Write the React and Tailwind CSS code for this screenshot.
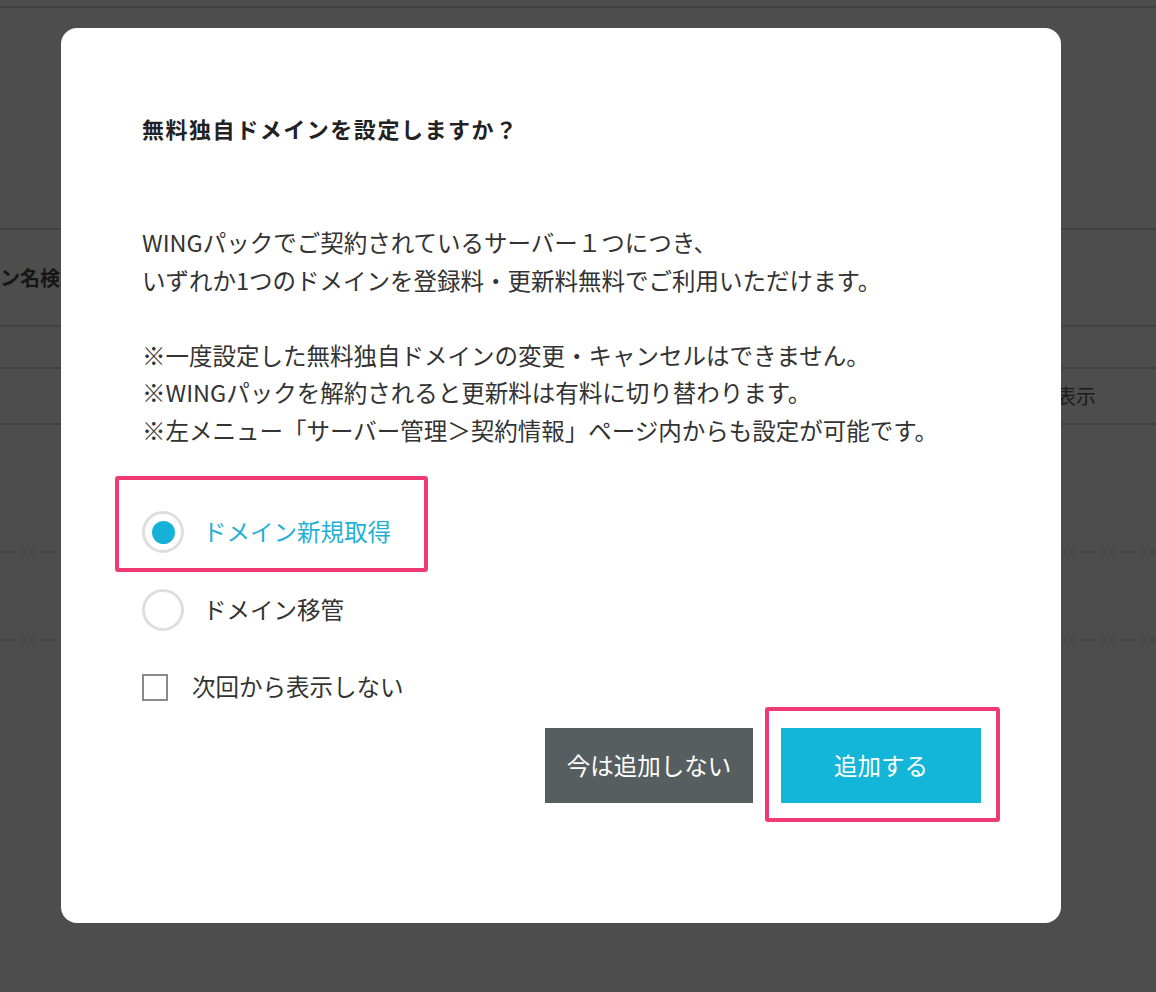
import { useState } from "react";

const font = { fontFamily: '"Noto Sans CJK JP", "Noto Sans", sans-serif' };

const Radio = ({ checked, label, onClick }) => (
  <button onClick={onClick} className="flex h-full items-center gap-[19px] text-left">
    <span className="flex h-[42px] w-[42px] items-center justify-center rounded-full border-[3px] border-[#dedede] bg-white">
      {checked && <span className="h-[23px] w-[23px] rounded-full bg-[#14b2d8]" />}
    </span>
    <span className={checked ? "text-[23.5px] text-[#1fb0d4]" : "text-[23.5px] text-[#333]"}>{label}</span>
  </button>
);

export default function App() {
  const [choice, setChoice] = useState("new");
  const [hide, setHide] = useState(false);

  return (
    <div className="relative h-[992px] w-full overflow-hidden bg-[#4d4d4d]" style={font}>
      {/* page behind the overlay */}
      <div className="h-[8px] border-b-2 border-[#424242]" />
      <div className="h-[222px] border-b-2 border-[#424242]" />
      <div className="flex h-[97px] items-center border-b-2 border-[#424242]">
        <span className="text-[20px] font-bold text-[#161616]">ン名検索</span>
      </div>
      <div className="h-[42px] border-b-2 border-[#424242]" />
      <div className="flex h-[56px] items-center justify-end border-b-2 border-[#424242] pr-[60px]">
        <span className="text-[20px] text-[#1c1c1c]">表示</span>
      </div>
      <div className="h-[128px] border-b-2 border-dashed border-[#444]" />
      <div className="h-[88px] border-b-2 border-dashed border-[#444]" />

      {/* modal */}
      <div className="absolute left-[61px] top-[28px] flex h-[895px] w-[1000px] flex-col rounded-[16px] bg-white px-[81px] pr-[80px] pt-[82px]">
        <h2 className="text-[22px] font-bold leading-[36px] tracking-[0.07em] text-[#222]">
          無料独自ドメインを設定しますか？
        </h2>

        <div className="mt-[78px] text-[23.5px] leading-[37.5px] text-[#333]">
          <p>
            WINGパックでご契約されているサーバー１つにつき、
            <br />
            いずれか1つのドメインを登録料・更新料無料でご利用いただけます。
          </p>
          <p className="mt-[37.5px]">
            ※一度設定した無料独自ドメインの変更・キャンセルはできません。
            <br />
            ※WINGパックを解約されると更新料は有料に切り替わります。
            <br />
            ※左メニュー「サーバー管理＞契約情報」ページ内からも設定が可能です。
          </p>
        </div>

        <div className="mt-[44px] flex flex-col">
          <div className="relative h-[78px]">
            <Radio checked={choice === "new"} label="ドメイン新規取得" onClick={() => setChoice("new")} />
            <div className="pointer-events-none absolute left-[-27px] top-[-17px] h-[96px] w-[313px] rounded-[3px] border-[4px] border-[#ef3a73]" />
          </div>
          <div className="h-[78px]">
            <Radio checked={choice === "transfer"} label="ドメイン移管" onClick={() => setChoice("transfer")} />
          </div>
          <button onClick={() => setHide((v) => !v)} className="flex h-[76px] items-center gap-[24px] text-left">
            <span className="flex h-[27px] w-[26px] items-center justify-center border-2 border-[#8a8a8a]">
              {hide && <span className="text-[18px] leading-none text-[#333]">✓</span>}
            </span>
            <span className="text-[23.5px] text-[#333]">次回から表示しない</span>
          </button>
        </div>

        <div className="mt-[3px] flex justify-end gap-[28px]">
          <button className="h-[75px] w-[208px] bg-[#575e60] text-[23.5px] text-white">今は追加しない</button>
          <div className="relative">
            <button className="h-[75px] w-[200px] bg-[#13b6d8] text-[23.5px] text-white">追加する</button>
            <div className="pointer-events-none absolute left-[-16px] top-[-21px] h-[115px] w-[235px] rounded-[3px] border-[4px] border-[#ef3a73]" />
          </div>
        </div>
      </div>
    </div>
  );
}
